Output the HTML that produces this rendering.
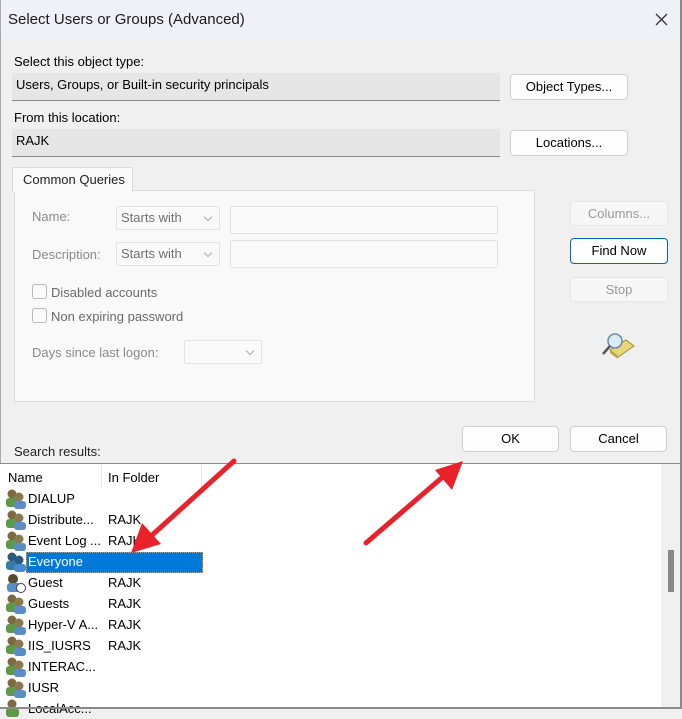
<!DOCTYPE html>
<html><head><style>
*{margin:0;padding:0;box-sizing:border-box}
body{width:682px;height:709px;overflow:hidden;background:#f0f0f0;font-family:"Liberation Sans",sans-serif;font-size:13px;color:#000;position:relative}
.a{position:absolute}
.btn{position:absolute;background:#fdfdfd;border:1px solid #d0d0d0;border-radius:4px;text-align:center;font-size:13px;line-height:24px}
.dis{color:#9a9a9a;background:#f7f7f7;border-color:#e6e6e6}
.fld{position:absolute;background:#e6e6e6;border-bottom:1px solid #8a8a8a;padding-left:4px;line-height:24px}
.lbl{position:absolute;color:#8a8a8a}
.sel{position:absolute;background:#fafafa;border:1px solid #e2e2e2;border-radius:2px;color:#707070;padding-left:4px;line-height:22px}
.sel:after{content:"";position:absolute;right:8px;top:7px;width:5px;height:5px;border-right:1px solid #aaa;border-bottom:1px solid #aaa;transform:rotate(45deg)}
.inp{position:absolute;background:#fafafa;border:1px solid #e2e2e2;border-radius:2px}
.cb{position:absolute;width:15px;height:15px;border:1px solid #b8b8b8;border-radius:3px;background:#fafafa}
.row{position:absolute;left:0;height:21px;line-height:21px;font-size:13px;width:210px}
.row .n{position:absolute;left:28px}
.row .f{position:absolute;left:108px}
.ic{position:absolute;left:5px;top:1px;width:22px;height:20px}
</style></head><body>
<div class="a" style="left:0;top:0;width:682px;height:39px;background:#eef2f8"></div>
<div class="a" style="left:8px;top:11px;font-size:15px;color:#1a1a1a">Select Users or Groups (Advanced)</div>
<svg class="a" style="left:655px;top:13px" width="13" height="13"><path d="M1 1L12 12M12 1L1 12" stroke="#333" stroke-width="1.3"/></svg>
<div class="a" style="left:680px;top:0;width:2px;height:709px;background:#8a8a8a"></div>
<div class="a" style="left:0;top:0;width:1px;height:709px;background:#aaa"></div>

<div class="a" style="left:14px;top:54px">Select this object type:</div>
<div class="fld" style="left:12px;top:73px;width:488px;height:28px">Users, Groups, or Built-in security principals</div>
<div class="btn" style="left:510px;top:74px;width:118px;height:26px">Object Types...</div>
<div class="a" style="left:14px;top:110px">From this location:</div>
<div class="fld" style="left:12px;top:129px;width:488px;height:28px">RAJK</div>
<div class="btn" style="left:510px;top:130px;width:118px;height:26px">Locations...</div>

<div class="a" style="left:14px;top:190px;width:521px;height:212px;background:#f9f9f9;border:1px solid #dcdcdc"></div>
<div class="a" style="left:12px;top:167px;width:121px;height:25px;background:#f9f9f9;border:1px solid #dcdcdc;border-bottom:none;padding:4px 0 0 10px;color:#222">Common Queries</div>
<div class="lbl" style="left:32px;top:209px">Name:</div>
<div class="sel" style="left:116px;top:206px;width:104px;height:24px">Starts with</div>
<div class="inp" style="left:230px;top:206px;width:268px;height:28px"></div>
<div class="lbl" style="left:32px;top:247px">Description:</div>
<div class="sel" style="left:116px;top:242px;width:104px;height:24px">Starts with</div>
<div class="inp" style="left:230px;top:240px;width:268px;height:28px"></div>
<div class="cb" style="left:32px;top:284px"></div><div class="lbl" style="left:51px;top:285px;color:#6a6a6a">Disabled accounts</div>
<div class="cb" style="left:32px;top:308px"></div><div class="lbl" style="left:51px;top:309px;color:#6a6a6a">Non expiring password</div>
<div class="lbl" style="left:32px;top:345px">Days since last logon:</div>
<div class="sel" style="left:184px;top:340px;width:78px;height:24px"></div>

<div class="btn dis" style="left:570px;top:201px;width:98px;height:25px">Columns...</div>
<div class="btn" style="left:570px;top:238px;width:98px;height:26px;border:1px solid #0067c0">Find Now</div>
<div class="btn dis" style="left:570px;top:277px;width:98px;height:25px">Stop</div>
<svg class="a" style="left:600px;top:330px" width="36" height="30"><path d="M10 20L26 10L34 16L18 27Z" fill="#e8d67a" stroke="#a08a30"/><path d="M10 20L18 27L18 29L10 23Z" fill="#c2a846"/><circle cx="15" cy="11" r="7" fill="#d9ecf7" stroke="#6a8aa0" stroke-width="1.5"/><path d="M10 16L3 24" stroke="#555" stroke-width="2.5"/></svg>

<div class="btn" style="left:462px;top:426px;width:97px;height:26px">OK</div>
<div class="btn" style="left:570px;top:426px;width:97px;height:26px">Cancel</div>
<div class="a" style="left:14px;top:444px;color:#222">Search results:</div>

<div class="a" style="left:0;top:463px;width:680px;height:246px;background:#fff;border-top:1px solid #8a8a8a"></div>
<div class="a" style="left:661px;top:464px;width:19px;height:245px;background:#f0f0f0"></div>
<div class="a" style="left:668px;top:550px;width:6px;height:42px;background:#888"></div>
<div class="a" style="left:8px;top:470px">Name</div>
<div class="a" style="left:101px;top:464px;width:1px;height:24px;background:#e5e5e5"></div>
<div class="a" style="left:108px;top:470px">In Folder</div>
<div class="a" style="left:201px;top:464px;width:1px;height:24px;background:#e5e5e5"></div>

<div class="a" style="left:26px;top:552px;width:177px;height:21px;background:#0078d7;border:1px dotted #e0a050"></div>
<div class="row" style="top:488px"><svg class="ic"><circle cx="7" cy="5" r="4.5" fill="#7a6a40"/><rect x="1" y="9" width="13" height="9" rx="3" fill="#5c9a4a"/><circle cx="14" cy="8" r="4.5" fill="#8a7a50"/><rect x="9" y="12" width="12" height="8" rx="3" fill="#5a8cc8"/></svg><span class="n">DIALUP</span></div>
<div class="row" style="top:509px"><svg class="ic"><circle cx="7" cy="5" r="4.5" fill="#7a6a40"/><rect x="1" y="9" width="13" height="9" rx="3" fill="#5c9a4a"/><circle cx="14" cy="8" r="4.5" fill="#8a7a50"/><rect x="9" y="12" width="12" height="8" rx="3" fill="#5a8cc8"/></svg><span class="n">Distribute...</span><span class="f">RAJK</span></div>
<div class="row" style="top:530px"><svg class="ic"><circle cx="7" cy="5" r="4.5" fill="#7a6a40"/><rect x="1" y="9" width="13" height="9" rx="3" fill="#5c9a4a"/><circle cx="14" cy="8" r="4.5" fill="#8a7a50"/><rect x="9" y="12" width="12" height="8" rx="3" fill="#5a8cc8"/></svg><span class="n">Event Log ...</span><span class="f">RAJK</span></div>
<div class="row" style="top:551px;color:#fff"><svg class="ic"><circle cx="7" cy="5" r="4.5" fill="#2a5a80"/><rect x="1" y="9" width="13" height="9" rx="3" fill="#3a7aa8"/><circle cx="14" cy="8" r="4.5" fill="#2a5a80"/><rect x="9" y="12" width="12" height="8" rx="3" fill="#4a8ac8"/></svg><span class="n">Everyone</span></div>
<div class="row" style="top:572px"><svg class="ic"><circle cx="8" cy="6" r="5" fill="#5a4a30"/><rect x="2" y="10" width="14" height="9" rx="3" fill="#5a8cc8"/><circle cx="16" cy="15" r="4.5" fill="#fff" stroke="#444"/></svg><span class="n">Guest</span><span class="f">RAJK</span></div>
<div class="row" style="top:593px"><svg class="ic"><circle cx="7" cy="5" r="4.5" fill="#7a6a40"/><rect x="1" y="9" width="13" height="9" rx="3" fill="#5c9a4a"/><circle cx="14" cy="8" r="4.5" fill="#8a7a50"/><rect x="9" y="12" width="12" height="8" rx="3" fill="#5a8cc8"/></svg><span class="n">Guests</span><span class="f">RAJK</span></div>
<div class="row" style="top:614px"><svg class="ic"><circle cx="7" cy="5" r="4.5" fill="#7a6a40"/><rect x="1" y="9" width="13" height="9" rx="3" fill="#5c9a4a"/><circle cx="14" cy="8" r="4.5" fill="#8a7a50"/><rect x="9" y="12" width="12" height="8" rx="3" fill="#5a8cc8"/></svg><span class="n">Hyper-V A...</span><span class="f">RAJK</span></div>
<div class="row" style="top:635px"><svg class="ic"><circle cx="7" cy="5" r="4.5" fill="#7a6a40"/><rect x="1" y="9" width="13" height="9" rx="3" fill="#5c9a4a"/><circle cx="14" cy="8" r="4.5" fill="#8a7a50"/><rect x="9" y="12" width="12" height="8" rx="3" fill="#5a8cc8"/></svg><span class="n">IIS_IUSRS</span><span class="f">RAJK</span></div>
<div class="row" style="top:656px"><svg class="ic"><circle cx="7" cy="5" r="4.5" fill="#7a6a40"/><rect x="1" y="9" width="13" height="9" rx="3" fill="#5c9a4a"/><circle cx="14" cy="8" r="4.5" fill="#8a7a50"/><rect x="9" y="12" width="12" height="8" rx="3" fill="#5a8cc8"/></svg><span class="n">INTERAC...</span></div>
<div class="row" style="top:677px"><svg class="ic"><circle cx="7" cy="5" r="4.5" fill="#7a6a40"/><rect x="1" y="9" width="13" height="9" rx="3" fill="#5c9a4a"/><circle cx="14" cy="8" r="4.5" fill="#8a7a50"/><rect x="9" y="12" width="12" height="8" rx="3" fill="#5a8cc8"/></svg><span class="n">IUSR</span></div>
<div class="row" style="top:698px"><svg class="ic"><circle cx="7" cy="5" r="4.5" fill="#7a6a40"/><rect x="1" y="9" width="13" height="9" rx="3" fill="#5c9a4a"/></svg><span class="n">LocalAcc...</span></div>
<div class="a" style="left:0;top:707px;width:682px;height:2px;background:#8a8a8a"></div>

<svg class="a" style="left:0;top:0" width="682" height="709">
<path d="M234 461L150 537" stroke="#e8212b" stroke-width="5" stroke-linecap="round"/>
<path d="M131 553L142 523L161 544Z" fill="#e8212b"/>
<path d="M366 543L445 475" stroke="#e8212b" stroke-width="5" stroke-linecap="round"/>
<path d="M463 461L452 490L435 470Z" fill="#e8212b"/>
</svg>
</body></html>
